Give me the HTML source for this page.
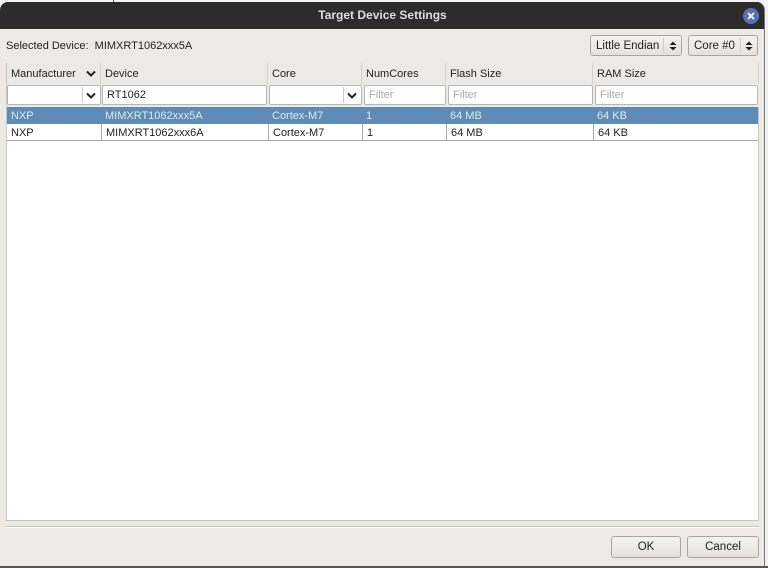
<!DOCTYPE html>
<html><head><meta charset="utf-8"><style>
*{box-sizing:border-box;margin:0;padding:0}
body{width:768px;height:568px;background:#f2f2f2;position:relative;overflow:hidden;font-family:"Liberation Sans",sans-serif;font-size:11px;color:#222}
.a{position:absolute}
#dlg{left:0;top:2px;width:765px;height:564px;background:#edeae6;border-radius:8px 8px 0 0;border-right:1px solid #777;overflow:hidden}
#title{left:0;top:0;width:765px;height:27px;background:#2c2c2c;color:#ddd;font-weight:bold;font-size:12px;text-align:center;line-height:27px}
.cell{position:absolute;padding-left:4px;line-height:18px;white-space:nowrap;overflow:hidden}
.hd{position:absolute;top:63px;height:21px;line-height:22px;padding-left:4px;border-right:1px solid #d5d2ce;background:#eceae6}
.inp{position:absolute;top:85px;height:20px;background:#fff;border:1px solid #b9b6b1;border-radius:2px;line-height:19px;padding-left:4px;color:#aaa}
.btn{position:absolute;background:linear-gradient(#f4f3f1,#e5e2de);border:1px solid #a9a6a1;border-radius:3px;text-align:center;line-height:20px;font-size:11.5px}
svg{position:absolute}
</style></head><body>
<div class="a" style="left:0;top:566px;width:768px;height:2px;background:#555"></div>
<div class="a" style="left:113px;top:0;width:1px;height:3px;background:#555"></div>
<div class="a" id="dlg">
 <div class="a" id="title">Target Device Settings</div>
 <div class="a" style="left:743px;top:6px;width:16px;height:16px;border-radius:50%;background:#5a6fba"><svg width="16" height="16" style="left:0;top:0"><path d="M5 5L11 11M11 5L5 11" stroke="#fff" stroke-width="1.6"/></svg></div>
</div>
<div class="a" style="left:6px;top:39px;line-height:14px;font-size:11px">Selected Device:&nbsp; MIMXRT1062xxx5A</div>
<div class="btn" style="left:590px;top:35px;width:92px;height:21px;text-align:left;padding-left:5px">Little Endian<span class="a" style="left:72px;top:2px;height:15px;border-left:1px solid #ccc"></span><svg width="8" height="12" style="left:78px;top:4px"><path d="M0.5 5L4 1.5L7.5 5ZM0.5 7L4 10.5L7.5 7Z" fill="#222"/></svg></div>
<div class="btn" style="left:688px;top:35px;width:70px;height:21px;text-align:left;padding-left:5px">Core #0<span class="a" style="left:51px;top:2px;height:15px;border-left:1px solid #ccc"></span><svg width="8" height="12" style="left:56px;top:4px"><path d="M0.5 5L4 1.5L7.5 5ZM0.5 7L4 10.5L7.5 7Z" fill="#222"/></svg></div>
<div class="a" style="left:6px;top:63px;width:753px;height:458px;background:#fff;border:1px solid #c9c6c1"></div>
<div class="a" style="left:7px;top:63px;width:752px;height:22px;background:#eceae6;border-bottom:1px solid #d5d2ce"></div>
<div class="hd" style="left:7px;width:94px">Manufacturer<svg width="10" height="8" style="left:79px;top:7px"><path d="M1 1.5L5 5.5L9 1.5" stroke="#222" stroke-width="2" fill="none"/></svg></div>
<div class="hd" style="left:101px;width:167px">Device</div>
<div class="hd" style="left:268px;width:94px">Core</div>
<div class="hd" style="left:362px;width:84px">NumCores</div>
<div class="hd" style="left:446px;width:147px">Flash Size</div>
<div class="hd" style="left:593px;width:166px">RAM Size</div>
<div class="a" style="left:7px;top:84px;width:752px;height:23px;background:#eceae6"></div>
<div class="inp" style="left:7px;width:94px"><span class="a" style="left:74px;top:1px;height:16px;border-left:1px solid #ccc"></span><svg width="10" height="8" style="left:78px;top:6px"><path d="M1 1.5L5 5.5L9 1.5" stroke="#222" stroke-width="2" fill="none"/></svg></div>
<div class="inp" style="left:102px;width:165px;color:#222">RT1062</div>
<div class="inp" style="left:269px;width:93px"><span class="a" style="left:73px;top:1px;height:16px;border-left:1px solid #ccc"></span><svg width="10" height="8" style="left:77px;top:6px"><path d="M1 1.5L5 5.5L9 1.5" stroke="#222" stroke-width="2" fill="none"/></svg></div>
<div class="inp" style="left:364px;width:82px">Filter</div>
<div class="inp" style="left:448px;width:145px">Filter</div>
<div class="inp" style="left:595px;width:163px">Filter</div>
<div class="a" style="left:7px;top:107px;width:751px;height:17px;background:#5f8cb6;color:#dfe8f1">
 <div class="cell" style="left:0">NXP</div><div class="cell" style="left:94px">MIMXRT1062xxx5A</div><div class="cell" style="left:261px">Cortex-M7</div><div class="cell" style="left:355px">1</div><div class="cell" style="left:439px">64 MB</div><div class="cell" style="left:586px">64 KB</div>
</div>
<div class="a" style="left:7px;top:124px;width:751px;height:17px;border-bottom:1px solid #aaa">
 <div class="cell" style="left:0">NXP</div><div class="cell" style="left:94px;border-left:1px solid #aaa;height:16px">MIMXRT1062xxx6A</div><div class="cell" style="left:261px;border-left:1px solid #aaa;height:16px">Cortex-M7</div><div class="cell" style="left:355px;border-left:1px solid #aaa;height:16px">1</div><div class="cell" style="left:439px;border-left:1px solid #aaa;height:16px">64 MB</div><div class="cell" style="left:586px;border-left:1px solid #aaa;height:16px">64 KB</div>
</div>
<div class="a" style="left:6px;top:526px;width:753px;height:2px;border-top:1px solid #c9c6c1;border-bottom:1px solid #fff"></div>
<div class="btn" style="left:611px;top:536px;width:70px;height:22px">OK</div>
<div class="btn" style="left:687px;top:536px;width:72px;height:22px">Cancel</div>
</body></html>
